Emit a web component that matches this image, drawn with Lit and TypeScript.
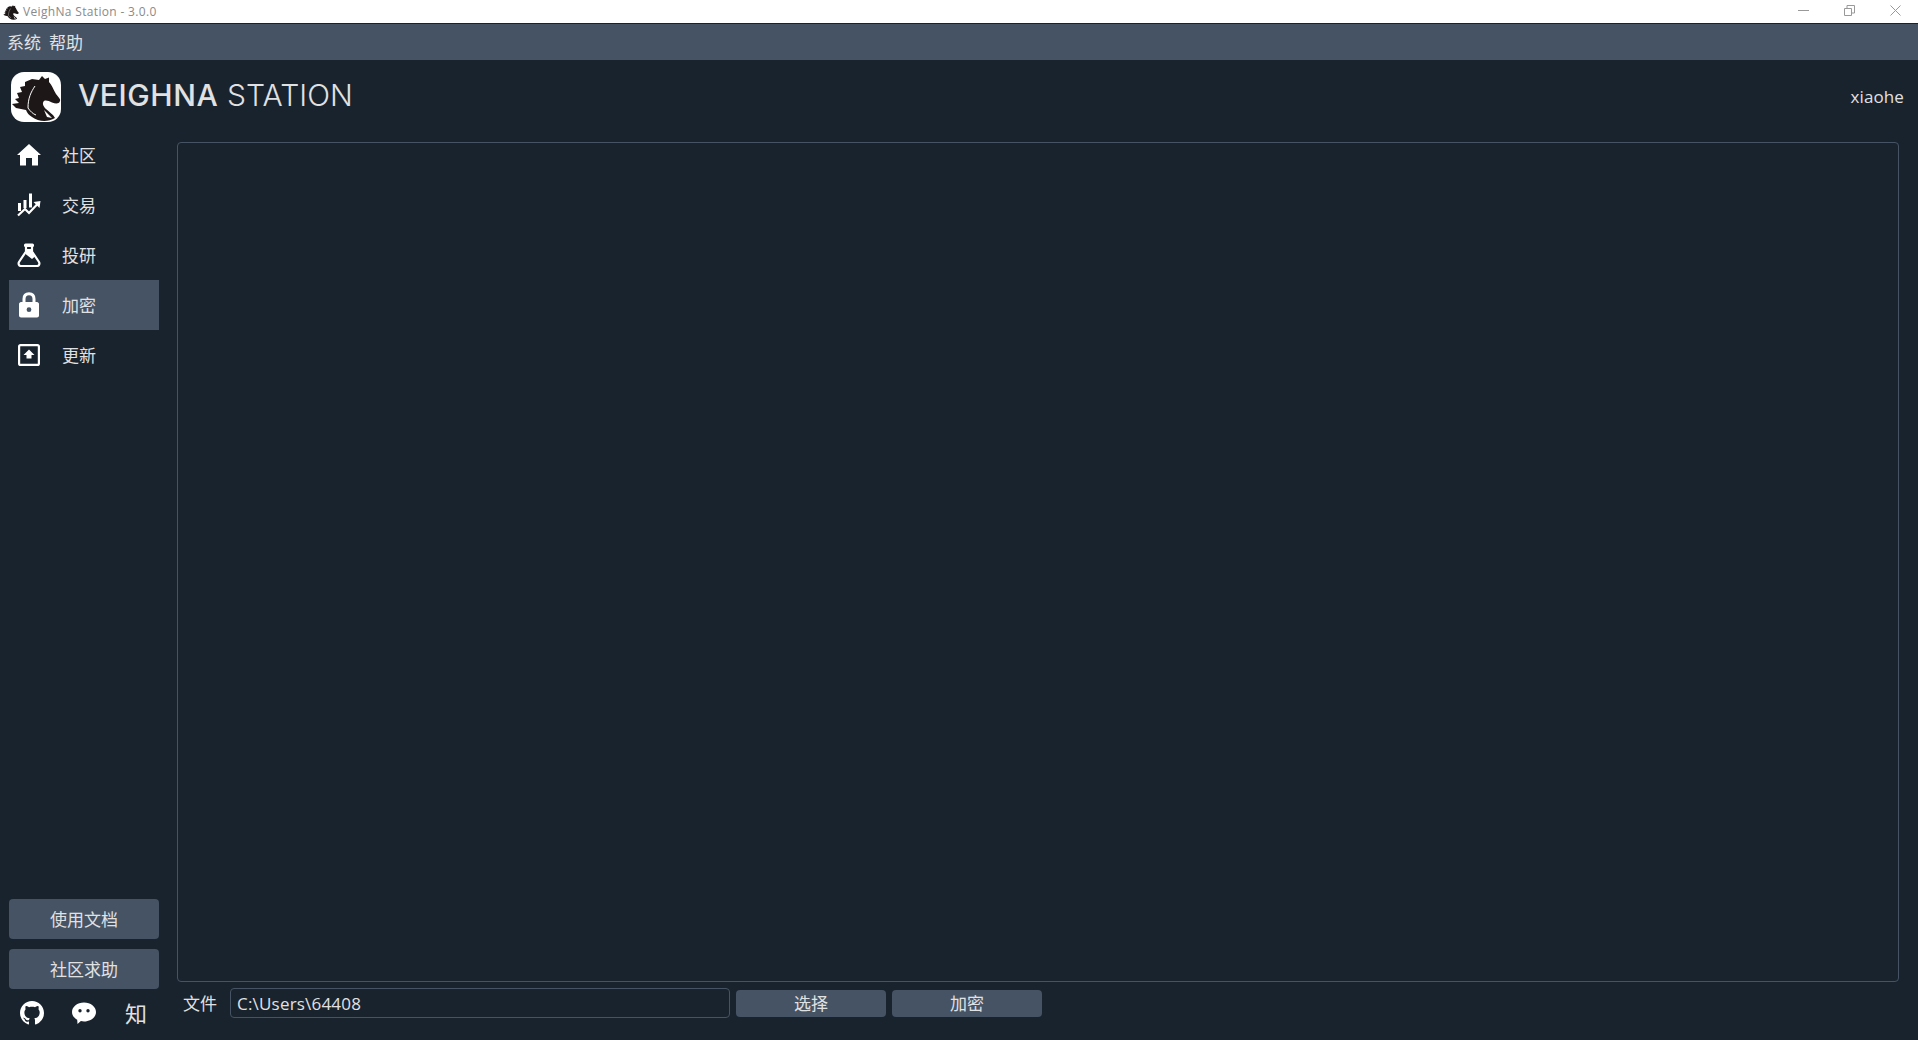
import { LitElement, html, css, svg } from "lit";
import { customElement } from "lit/decorators.js";

const horse = svg`<path fill="#1e1718" d="M21 7 L28 8 L31 4 L34 7 L38 5.500 L38 10 C41 13 42 17 45 22 C47 25 50 27 49 29 C48 32 45 32 41 30.500 C38 29 35 28 33 29 C31 31 32 34 35 37 C38 40 42 42 44 46 C37 50 28 50 21 45 C18 43 16 41 15 38 L5 36 L1 32 L8 31 L4 27 L8 26 L6 21 L11 20 L9 15 L14 14 L14 10 Z"/><path fill="none" stroke="#fff" stroke-width="1" d="M24 14 C20 20 17 26 17 36 C19 39 22 42 25 43"/><path fill="#fff" d="M33 38 L41 46 L36 45 Z"/>`;

const icons = {
  home: svg`<svg viewBox="0 0 24 22" width="24" height="22"><path fill="#fff" d="M12 0 L24 11 L21 11 L21 21.500 L15 21.500 L15 14 L9 14 L9 21.500 L3 21.500 L3 11 L0 11 Z"/></svg>`,
  chart: svg`<svg viewBox="0 0 24 24" width="24" height="24"><g fill="#fff"><rect x="1" y="10" width="3" height="8"/><rect x="6.500" y="7" width="3" height="8"/><rect x="12" y="0.500" width="3" height="14"/></g><path fill="none" stroke="#fff" stroke-width="2.200" d="M1 22.500 L8 16 L12 20 L20.500 11"/><path fill="#fff" d="M16.500 9 L23.500 8 L22.500 15 Z"/></svg>`,
  flask: svg`<svg viewBox="0 0 24 24" width="24" height="24"><rect x="7" y="0.500" width="10" height="3.400" rx="1.500" fill="#fff"/><path fill="none" stroke="#fff" stroke-width="2.200" stroke-linejoin="round" d="M9 3 L9 8.500 L2 19 C1 21 2 23 4 23 L20 23 C22 23 23 21 22 19 L15 8.500 L15 3"/><path fill="#fff" d="M9 6 L15 6 L15 9 L18 13.500 L15 16 L8.500 11 Z"/></svg>`,
  lock: svg`<svg viewBox="0 0 20 26" width="20" height="26"><path fill="none" stroke="#fff" stroke-width="3" d="M5 11 L5 7 C5 3.500 7 1.700 10 1.700 C13 1.700 15 3.500 15 7 L15 11"/><path fill="#fff" fill-rule="evenodd" d="M2 10 L18 10 C19 10 20 11 20 12 L20 23.500 C20 24.500 19 25.500 18 25.500 L2 25.500 C1 25.500 0 24.500 0 23.500 L0 12 C0 11 1 10 2 10 Z M10 15.300 A2.400 2.400 0 1 0 10 20.100 A2.400 2.400 0 1 0 10 15.300 Z"/></svg>`,
  upload: svg`<svg viewBox="0 0 22 22" width="22" height="22"><rect x="1.100" y="1.100" width="19.800" height="19.800" rx="1.500" fill="none" stroke="#fff" stroke-width="2.200"/><path fill="#fff" d="M11 5.500 L16.500 11 L13.500 11 L13.500 14.500 L8.500 14.500 L8.500 11 L5.500 11 Z"/></svg>`,
  github: svg`<svg viewBox="0 0 16 16" width="24" height="24"><path fill="#fff" d="M8 0C3.580 0 0 3.580 0 8c0 3.540 2.290 6.530 5.470 7.590.4.070.55-.17.55-.38 0-.19-.01-.82-.01-1.490-2.010.37-2.530-.49-2.690-.94-.09-.23-.48-.94-.82-1.130-.28-.15-.68-.52-.01-.53.630-.01 1.080.58 1.230.82.720 1.210 1.870.87 2.330.66.070-.52.280-.87.510-1.070-1.780-.2-3.640-.89-3.640-3.950 0-.87.310-1.590.820-2.150-.08-.2-.36-1.020.08-2.120 0 0 .67-.21 2.200.82.640-.18 1.320-.27 2-.27s1.360.09 2 .27c1.530-1.040 2.200-.82 2.200-.82.440 1.100.160 1.920.080 2.120.510.560.820 1.270.820 2.150 0 3.070-1.870 3.750-3.650 3.950.290.250.540.730.540 1.480 0 1.070-.01 1.930-.01 2.200 0 .21.150.46.550.38A8.010 8.010 0 0 0 16 8c0-4.420-3.580-8-8-8z"/></svg>`,
  chat: svg`<svg viewBox="0 0 24 24" width="24" height="24"><path fill="#fff" fill-rule="evenodd" d="M12 1.500 C18.600 1.500 24 5.700 24 11 C24 16.300 18.600 20.500 12 20.500 C10.900 20.500 9.900 20.400 8.900 20.100 L5.500 23 L5.200 18.700 C2 17 0 14.200 0 11 C0 5.700 5.400 1.500 12 1.500 Z M8 8 A1.700 1.700 0 1 0 8 11.400 A1.700 1.700 0 1 0 8 8 Z M16 8 A1.700 1.700 0 1 0 16 11.400 A1.700 1.700 0 1 0 16 8 Z"/></svg>`,
};

const nav = [
  ["社区", icons.home],
  ["交易", icons.chart],
  ["投研", icons.flask],
  ["加密", icons.lock],
  ["更新", icons.upload],
] as const;

@customElement("app-root")
export class AppRoot extends LitElement {
  static styles = css`
    :host {
      display: flex;
      flex-direction: column;
      width: 1918px;
      height: 1040px;
      overflow: hidden;
      background: #19232d;
      color: #e0e1e3;
      font-family: "Open Sans", "Noto Sans CJK SC", sans-serif;
      font-size: 17px;
    }
    .titlebar {
      flex: none;
      height: 23px;
      background: #fff;
      border-bottom: 1px solid #19232d;
      display: flex;
      align-items: center;
      color: #8a8a8a;
      font-size: 12px;
      padding-left: 3px;
    }
    .titlebar .app-icon { margin-right: 4px; flex: none; }
    .titlebar .name { flex: 1; letter-spacing: 0.33px; }
    .win { display: flex; align-items: center; padding-bottom: 2px; }
    .win button {
      all: unset;
      width: 46px;
      height: 21px;
      display: flex;
      align-items: center;
      justify-content: center;
    }
    .menu {
      flex: none;
      height: 36px;
      box-sizing: border-box;
      padding: 0 0 2px 7px;
      background: #455364;
      display: flex;
      align-items: center;
      gap: 8px;
    }
    .header {
      flex: none;
      height: 70px;
      box-sizing: border-box;
      padding: 4px 14px 0 11px;
      display: flex;
      align-items: center;
    }
    .logo {
      width: 50px;
      height: 50px;
      background: #fff;
      border-radius: 13px;
      flex: none;
    }
    .brand {
      margin: -4px 0 0 17px;
      font-family: "Inter", sans-serif;
      font-size: 30px;
      font-weight: 500;
      flex: 1;
      letter-spacing: 0.6px;
    }
    .brand span { font-weight: 300; letter-spacing: 0; }
    .user { margin-top: -1px; letter-spacing: 0.1px; }
    .body { flex: 1; display: flex; min-height: 0; }
    .side {
      flex: none;
      width: 150px;
      margin-left: 9px;
      display: flex;
      flex-direction: column;
    }
    .nav { flex: 1; display: flex; flex-direction: column; }
    .item {
      height: 50px;
      display: flex;
      align-items: center;
      padding-left: 8px;
    }
    .item.on { background: #455364; }
    .item .ic {
      width: 24px;
      display: flex;
      justify-content: center;
      margin-right: 21px;
    }
    .item .txt { padding-bottom: 2px; }
    .btn {
      box-sizing: border-box;
      padding-bottom: 2px;
      background: #455364;
      border-radius: 4px;
      display: flex;
      align-items: center;
      justify-content: center;
    }
    .side .btn { height: 40px; margin-bottom: 10px; }
    .social {
      height: 41px;
      box-sizing: border-box;
      padding: 0 0 14px 11px;
      display: flex;
      align-items: center;
      gap: 28px;
    }
    .social > * { display: flex; }
    .zhi { font-size: 22px; line-height: 24px; margin-left: 1px; }
    .content {
      flex: 1;
      display: flex;
      flex-direction: column;
      margin-left: 18px;
      margin-right: 19px;
      padding-top: 12px;
      min-width: 0;
    }
    .frame {
      flex: 1;
      border: 1px solid #455364;
      border-radius: 4px;
    }
    .row {
      flex: none;
      display: flex;
      align-items: center;
      margin-top: 6px;
      margin-bottom: 22px;
      height: 30px;
    }
    .label { width: 53px; padding: 0 0 1px 6px; box-sizing: border-box; }
    .input {
      width: 500px;
      height: 30px;
      box-sizing: border-box;
      border: 1px solid #455364;
      border-radius: 4px;
      padding-left: 6px;
      display: flex;
      align-items: center;
      letter-spacing: 0.2px;
    }
    .row .btn { width: 150px; height: 27px; margin-left: 6px; }
  `;

  render() {
    return html`
      <div class="titlebar">
        <svg class="app-icon" viewBox="0 0 50 50" width="16" height="16">${horse}</svg>
        <span class="name">VeighNa Station - 3.0.0</span>
        <div class="win">
          <button aria-label="minimize"><svg width="11" height="11"><path d="M0 5.500H11" stroke="#999"/></svg></button>
          <button aria-label="restore"><svg width="11" height="11"><path d="M.500 3.500h7v7h-7zM3 3V.500h7.500V8H8" fill="none" stroke="#999"/></svg></button>
          <button aria-label="close"><svg width="11" height="11"><path d="M.500.500l10 10M10.500.500l-10 10" stroke="#999"/></svg></button>
        </div>
      </div>
      <div class="menu"><span>系统</span><span>帮助</span></div>
      <div class="header">
        <svg class="logo" viewBox="0 0 50 50">${horse}</svg>
        <div class="brand">VEIGHNA <span>STATION</span></div>
        <div class="user">xiaohe</div>
      </div>
      <div class="body">
        <aside class="side">
          <nav class="nav">
            ${nav.map(
              ([label, icon]) => html`
                <div class="item ${label === "加密" ? "on" : ""}">
                  <span class="ic">${icon}</span><span class="txt">${label}</span>
                </div>
              `
            )}
          </nav>
          <div class="btn">使用文档</div>
          <div class="btn">社区求助</div>
          <div class="social">
            <span>${icons.github}</span>
            <span>${icons.chat}</span>
            <span class="zhi">知</span>
          </div>
        </aside>
        <main class="content">
          <div class="frame"></div>
          <div class="row">
            <span class="label">文件</span>
            <div class="input">C:\\Users\\64408</div>
            <div class="btn">选择</div>
            <div class="btn">加密</div>
          </div>
        </main>
      </div>
    `;
  }
}
